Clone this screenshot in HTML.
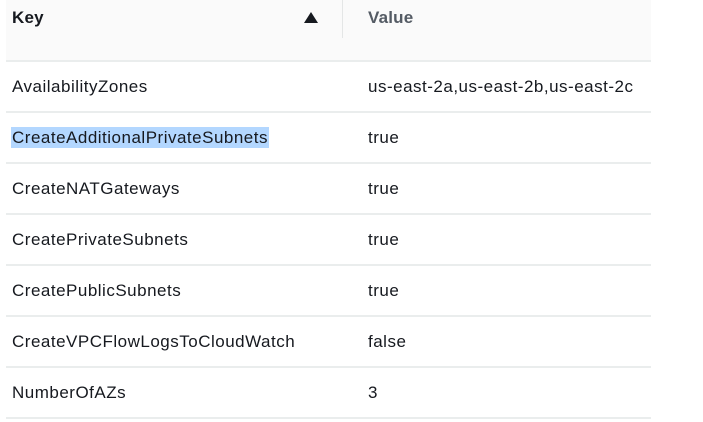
<!DOCTYPE html>
<html><head><style>
body{margin:0;width:703px;height:422px;background:#fff;font-family:"Liberation Sans",sans-serif;color:#16191f;position:relative;overflow:hidden}
.hd{position:absolute;left:6px;top:0;width:645px;height:61px;background:#fafafa}
.div{position:absolute;left:342px;top:0;width:1px;height:38px;background:#e4e6e6}
.line{position:absolute;left:6px;width:645px;height:2px;background:#eaeded}
.t{position:absolute;font-size:17px;letter-spacing:0.5px;line-height:20px;white-space:nowrap}
.b{font-weight:bold;letter-spacing:0.2px}
.hl{background:#b3d7ff}
</style></head><body>
<div class="hd"></div><div class="div"></div>
<div class="t b" style="left:12px;top:8px">Key</div>
<svg style="position:absolute;left:304px;top:12px" width="14" height="11"><path d="M7 0L14 11H0Z" fill="#16191f"/></svg>
<div class="t b" style="left:368px;top:8px;color:#545b64">Value</div>
<div class="line" style="top:60px"></div>
<div class="line" style="top:111px"></div>
<div class="line" style="top:162px"></div>
<div class="line" style="top:213px"></div>
<div class="line" style="top:264px"></div>
<div class="line" style="top:315px"></div>
<div class="line" style="top:366px"></div>
<div class="line" style="top:417px"></div>
<div class="t" style="left:12px;top:77px">AvailabilityZones</div><div class="t" style="left:368px;top:77px">us-east-2a,us-east-2b,us-east-2c</div>
<div class="t" style="left:11px;top:128px"><span class="hl" style="padding:1px 1px">CreateAdditionalPrivateSubnets</span></div><div class="t" style="left:368px;top:128px">true</div>
<div class="t" style="left:12px;top:179px">CreateNATGateways</div><div class="t" style="left:368px;top:179px">true</div>
<div class="t" style="left:12px;top:230px">CreatePrivateSubnets</div><div class="t" style="left:368px;top:230px">true</div>
<div class="t" style="left:12px;top:281px">CreatePublicSubnets</div><div class="t" style="left:368px;top:281px">true</div>
<div class="t" style="left:12px;top:332px">CreateVPCFlowLogsToCloudWatch</div><div class="t" style="left:368px;top:332px">false</div>
<div class="t" style="left:12px;top:383px">NumberOfAZs</div><div class="t" style="left:368px;top:383px">3</div>
</body></html>
